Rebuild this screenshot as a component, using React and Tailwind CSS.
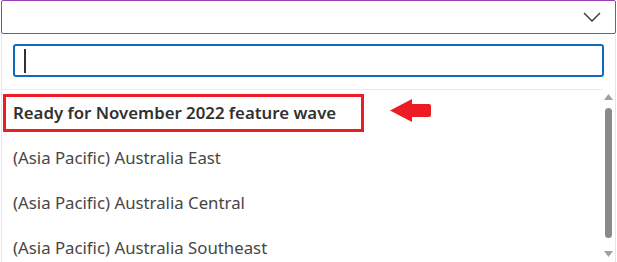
const REGIONS = [
  '(Asia Pacific) Australia East',
  '(Asia Pacific) Australia Central',
  '(Asia Pacific) Australia Southeast',
]

function Chevron() {
  return (
    <svg width="18" height="10" viewBox="0 0 18 10" fill="none">
      <path d="M1 1l8 8 8-8" stroke="#323130" strokeWidth="1.3" />
    </svg>
  )
}

function Scrollbar() {
  return (
    <div className="flex w-[13px] flex-col items-center bg-white pt-[5px]">
      <svg width="9" height="6" viewBox="0 0 9 6">
        <path d="M4.5 0L9 6H0z" fill="#a0a0a0" />
      </svg>
      <div className="mt-[8px] h-[130px] w-[7px] rounded-full bg-[#8a8a8a]" />
      <svg className="mt-[13px]" width="9" height="6" viewBox="0 0 9 6">
        <path d="M0 0h9L4.5 6z" fill="#a0a0a0" />
      </svg>
    </div>
  )
}

export default function App() {
  return (
    <div
      className="relative h-[262px] w-[617px] overflow-hidden bg-white text-[16.8px] text-[#323130]"
      style={{ fontFamily: '"Noto Sans", "Open Sans", sans-serif' }}
    >
      <div className="mx-[1px] flex h-[34px] items-center justify-end rounded-[2px] border border-[#9b3db3] pr-[14px]">
        <Chevron />
      </div>

      <div className="mx-[1px] border-x border-[#e6e6e6]">
        <div className="px-[11px] pb-[12px] pt-[10px]">
          <div className="flex h-[33px] items-center rounded-[3px] border-2 border-[#0f6cbd] pl-[9px]">
            <span className="h-[24px] w-[1.5px] bg-[#323130]" />
          </div>
        </div>

        <div className="flex">
          <ul className="flex-1 border-t border-[#edebe9]">
            <li className="flex h-[45px] items-center pl-[11px] font-semibold">
              Ready for November 2022 feature wave
            </li>
            {REGIONS.map((item) => (
              <li key={item} className="flex h-[45px] items-center pl-[11px] text-[#484644]">
                {item}
              </li>
            ))}
          </ul>
          <Scrollbar />
        </div>
      </div>

      {/* annotation */}
      <div className="absolute left-[3px] top-[94px] h-[38px] w-[361px] border-[3px] border-[#ed1c24]" />
      <svg className="absolute left-[390px] top-[99px]" width="41" height="23" viewBox="0 0 41 23">
        <path d="M0 11.5L22 0v5h17a2 2 0 012 2v9a2 2 0 01-2 2H22v5z" fill="#ed1c24" />
      </svg>
    </div>
  )
}
